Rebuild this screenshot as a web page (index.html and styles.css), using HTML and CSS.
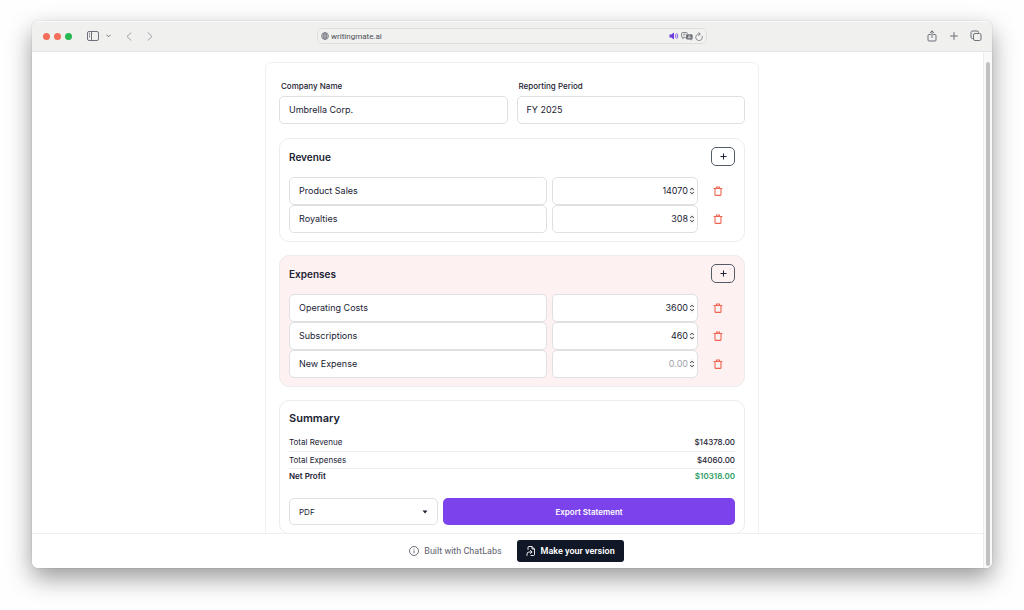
FILE: index.html
```html
<!DOCTYPE html>
<html lang="en">

<head>
    <meta charset="UTF-8">
    <meta name="viewport" content="width=device-width, initial-scale=1.0">
    <title>Income Statement</title>
    <link rel="stylesheet" href="styles.css">
</head>

<body>
    <!-- shared icons -->
    <svg class="sprite" aria-hidden="true">
        <symbol id="trash" viewBox="0 0 10 10">
            <path d="M1 2.500h8M3.500 2.300V1h3v1.300M2 2.700V8.400q0 1 1 1h4q1 0 1-1V2.700" fill="none" stroke="currentColor" stroke-width="1.100" stroke-linecap="round" stroke-linejoin="round" />
        </symbol>
        <symbol id="stepper" viewBox="0 0 6 10">
            <rect x="0.300" y="0.300" width="5.400" height="9.400" rx="2.500" fill="#f3f3f4" />
            <path d="M1.500 3.700L3 2.100L4.500 3.700M1.500 6.300L3 7.900L4.500 6.300" fill="none" stroke="#333" stroke-width="0.900" stroke-linecap="round" stroke-linejoin="round" />
        </symbol>
    </svg>

    <div class="window">
        <header class="toolbar">
            <div class="toolbar-left">
                <div class="lights">
                    <span class="light close"></span>
                    <span class="light minimize"></span>
                    <span class="light zoom"></span>
                </div>
                <div class="sidebar-group">
                    <button class="tool" aria-label="Sidebar">
                        <svg width="12" height="10" viewBox="0 0 12 10" fill="none" stroke="currentColor">
                            <rect x="0.500" y="0.500" width="11" height="9" rx="1.500" />
                            <path d="M4.500 .5v9M2 2.500h1M2 4.200h1M2 5.900h1" />
                        </svg>
                    </button>
                    <button class="tool menu" aria-label="Tab groups">
                        <svg width="5" height="4" viewBox="0 0 5 4" fill="none" stroke="currentColor" stroke-linecap="round">
                            <path d="M.7 1l1.800 1.800L4.300 1" />
                        </svg>
                    </button>
                </div>
                <div class="nav">
                    <button class="tool" aria-label="Back">
                        <svg width="6" height="9" viewBox="0 0 6 9" fill="none" stroke="currentColor" stroke-linecap="round">
                            <path d="M5 .7L1 4.500l4 3.800" />
                        </svg>
                    </button>
                    <button class="tool" aria-label="Forward">
                        <svg width="6" height="9" viewBox="0 0 6 9" fill="none" stroke="currentColor" stroke-linecap="round">
                            <path d="M1 .7l4 3.800l-4 3.800" />
                        </svg>
                    </button>
                </div>
            </div>

            <div class="address">
                <svg width="8" height="8" viewBox="0 0 8 8" fill="none" stroke="currentColor" stroke-width="0.700">
                    <circle cx="4" cy="4" r="3.500" />
                    <ellipse cx="4" cy="4" rx="1.700" ry="3.500" />
                    <path d="M.5 4h7M4 .5v7M1.200 2.200h5.600M1.200 5.800h5.600" />
                </svg>
                <input class="url" type="text" aria-label="Address" value="writingmate.ai">
                <button class="tool sound" aria-label="Mute">
                    <svg width="10" height="8" viewBox="0 0 10 8">
                        <path d="M.5 2.500h1.800L5 .5v7L2.300 5.500H.5z" fill="currentColor" />
                        <path d="M6.500 2.600q1 1.400 0 2.800M7.900 1.400q2 2.600 0 5.200" fill="none" stroke="currentColor" stroke-width="0.800" stroke-linecap="round" />
                    </svg>
                </button>
                <button class="tool" aria-label="Translate">
                    <svg width="12" height="9" viewBox="0 0 12 9">
                        <path d="M4.800 5.500H3L1.800 6.700V5.500Q.5 5.500 .5 4.300V1.700Q.5.500 1.700.5H5.300Q6.500 .5 6.500 1.700" fill="none" stroke="currentColor" stroke-width="0.800" />
                        <path d="M2 4.200q1.600-.7 1.900-2M1.800 2.100h2.900" fill="none" stroke="currentColor" stroke-width="0.600" />
                        <path d="M6.200 2.200h4.200q1.200 0 1.200 1.200v3q0 1.100-1.100 1.100v1.200L9.200 7.500H6.200Q5 7.500 5 6.300V3.400q0-1.200 1.200-1.200z" fill="currentColor" />
                        <path d="M7 6.500l1.300-3L9.600 6.500M7.400 5.500h1.800" fill="none" stroke="#f1f1ef" stroke-width="0.600" />
                    </svg>
                </button>
                <button class="tool" aria-label="Reload">
                    <svg width="8" height="9" viewBox="0 0 8 9" fill="none" stroke="currentColor" stroke-width="0.800" stroke-linecap="round">
                        <path d="M7.200 4.200A3.300 3.300 0 1 1 4 2h1M3.600 .5L5.200 2L3.600 3.500" />
                    </svg>
                </button>
            </div>

            <div class="toolbar-right">
                <button class="tool" aria-label="Share">
                    <svg width="12" height="12" viewBox="0 0 12 12" fill="none" stroke="currentColor" stroke-linecap="round" stroke-linejoin="round">
                        <path d="M4.500 4.500H3q-1 0-1 1V10q0 1 1 1h6q1 0 1-1V5.500q0-1-1-1H7.500M6 7.500V1M4.200 2.600L6 1l1.800 1.600" />
                    </svg>
                </button>
                <button class="tool" aria-label="New tab">
                    <svg width="12" height="12" viewBox="0 0 12 12" fill="none" stroke="currentColor" stroke-linecap="round">
                        <path d="M6 2.500v7M2.500 6h7" />
                    </svg>
                </button>
                <button class="tool" aria-label="Tab overview">
                    <svg width="12" height="12" viewBox="0 0 12 12" fill="none" stroke="currentColor">
                        <rect x="3.500" y="3.500" width="7.500" height="7" rx="1.500" />
                        <path d="M3.500 8.500H2.500q-1.500 0-1.500-1.500V2.500Q1 1 2.500 1H7q1.500 0 1.500 1.500V3.500" />
                    </svg>
                </button>
            </div>
        </header>

        <main class="page">
            <div class="content">
                <form class="statement">
                    <div class="fields">
                        <div class="field">
                            <label for="company">Company Name</label>
                            <input class="input" type="text" id="company" value="Umbrella Corp.">
                        </div>
                        <div class="field">
                            <label for="period">Reporting Period</label>
                            <input class="input" type="text" id="period" value="FY 2025">
                        </div>
                    </div>

                    <section class="panel">
                        <div class="panel-head">
                            <h3>Revenue</h3>
                            <button type="button" class="add" aria-label="Add revenue">
                                <svg width="7" height="7" viewBox="0 0 7 7"><path d="M3.500 .5v6M.5 3.500h6" stroke="currentColor" /></svg>
                            </button>
                        </div>
                        <div class="row">
                            <input class="input" type="text" aria-label="Revenue name" value="Product Sales">
                            <div class="amount">
                                <input type="number" aria-label="Revenue amount" placeholder="0.00" value="14070">
                                <svg width="6" height="10"><use href="#stepper" /></svg>
                            </div>
                            <button type="button" class="remove" aria-label="Remove"><svg width="10" height="10"><use href="#trash" /></svg></button>
                        </div>
                        <div class="row">
                            <input class="input" type="text" aria-label="Revenue name" value="Royalties">
                            <div class="amount">
                                <input type="number" aria-label="Revenue amount" placeholder="0.00" value="308">
                                <svg width="6" height="10"><use href="#stepper" /></svg>
                            </div>
                            <button type="button" class="remove" aria-label="Remove"><svg width="10" height="10"><use href="#trash" /></svg></button>
                        </div>
                    </section>

                    <section class="panel expenses">
                        <div class="panel-head">
                            <h3>Expenses</h3>
                            <button type="button" class="add" aria-label="Add expense">
                                <svg width="7" height="7" viewBox="0 0 7 7"><path d="M3.500 .5v6M.5 3.500h6" stroke="currentColor" /></svg>
                            </button>
                        </div>
                        <div class="row">
                            <input class="input" type="text" aria-label="Expense name" value="Operating Costs">
                            <div class="amount">
                                <input type="number" aria-label="Expense amount" placeholder="0.00" value="3600">
                                <svg width="6" height="10"><use href="#stepper" /></svg>
                            </div>
                            <button type="button" class="remove" aria-label="Remove"><svg width="10" height="10"><use href="#trash" /></svg></button>
                        </div>
                        <div class="row">
                            <input class="input" type="text" aria-label="Expense name" value="Subscriptions">
                            <div class="amount">
                                <input type="number" aria-label="Expense amount" placeholder="0.00" value="460">
                                <svg width="6" height="10"><use href="#stepper" /></svg>
                            </div>
                            <button type="button" class="remove" aria-label="Remove"><svg width="10" height="10"><use href="#trash" /></svg></button>
                        </div>
                        <div class="row">
                            <input class="input" type="text" aria-label="Expense name" value="New Expense">
                            <div class="amount">
                                <input type="number" aria-label="Expense amount" placeholder="0.00">
                                <svg width="6" height="10"><use href="#stepper" /></svg>
                            </div>
                            <button type="button" class="remove" aria-label="Remove"><svg width="10" height="10"><use href="#trash" /></svg></button>
                        </div>
                    </section>

                    <section class="panel">
                        <h2>Summary</h2>
                        <table class="totals">
                            <tr>
                                <th>Total Revenue</th>
                                <td>$14378.00</td>
                            </tr>
                            <tr>
                                <th>Total Expenses</th>
                                <td>$4060.00</td>
                            </tr>
                            <tr class="net">
                                <th>Net Profit</th>
                                <td>$10318.00</td>
                            </tr>
                        </table>
                        <div class="export">
                            <div class="format">
                                <select aria-label="Export format">
                                    <option>PDF</option>
                                </select>
                                <svg width="6" height="4" viewBox="0 0 6 4"><path d="M.5.500h5L3 3.500z" fill="currentColor" /></svg>
                            </div>
                            <button type="button" class="export-btn">Export Statement</button>
                        </div>
                    </section>
                </form>
            </div>

            <footer class="footer">
                <a class="built" href="#">
                    <svg width="10" height="10" viewBox="0 0 10 10" fill="none" stroke="currentColor" stroke-width="0.900">
                        <circle cx="5" cy="5" r="4.500" />
                        <path d="M5 4.500v2.800M5 2.600v1" />
                    </svg>
                    Built with ChatLabs
                </a>
                <button class="remix">
                    <svg width="10" height="10" viewBox="0 0 10 10" fill="none" stroke="currentColor" stroke-width="0.900" stroke-linecap="round" stroke-linejoin="round">
                        <path d="M2 3.500V1.500q0-1 1-1h3L8.500 3v5.500q0 1-1 1H5M6 .7V3h2.300M1 9.500V8q0-2 2-2h2.800M4.400 4.500L6 6L4.400 7.500" />
                    </svg>
                    Make your version
                </button>
            </footer>

            <div class="scrollbar">
                <div class="thumb"></div>
            </div>
        </main>
    </div>
</body>

</html>
```

FILE: styles.css
```css
* {
    margin: 0;
    padding: 0;
    box-sizing: border-box;
}

body {
    height: 100vh;
    padding: 21px 32px 42px;
    background-color: #fefefe;
    color: #1a2233;
    font-family: "Inter", sans-serif;
    font-size: 9px;
}

button,
input,
select {
    font: inherit;
    color: inherit;
    border: none;
    background: none;
    outline: 0;
}

button {
    cursor: pointer;
}

svg {
    display: block;
    flex: none;
}

.sprite {
    position: absolute;
    width: 0;
    height: 0;
}

.window {
    height: 100%;
    display: flex;
    flex-direction: column;
    overflow: hidden;
    background-color: #fff;
    border-radius: 6px;
    box-shadow: 0 0 1px rgba(0, 0, 0, 0.4), 0 10px 24px rgba(0, 0, 0, 0.4);
}

/* browser toolbar */
.toolbar {
    flex: none;
    height: 31px;
    padding: 0 10px 1px;
    display: grid;
    grid-template-columns: 1fr 390px 1fr;
    align-items: center;
    background-color: #f0f0ee;
    border-top: 1px solid #fafafa;
    border-bottom: 1px solid #e4e4e2;
}

.toolbar-left,
.lights,
.sidebar-group,
.nav,
.toolbar-right {
    display: flex;
    align-items: center;
}

.toolbar-left {
    gap: 15px;
}

.lights {
    gap: 4px;
    padding-left: 1px;
}

.light {
    width: 7px;
    height: 7px;
    border-radius: 50%;
    background-color: #f27059;
}

.light.zoom {
    background-color: #27b753;
}

.tool {
    display: flex;
    color: #6d717a;
}

.sidebar-group {
    gap: 3px;
}

.menu {
    padding-left: 3px;
    border-left: 1px solid #e6e6e5;
}

.nav {
    gap: 15px;
}

.nav .tool {
    color: #9c9fa5;
}

.toolbar-right {
    justify-content: flex-end;
    gap: 10px;
}

.address {
    height: 16px;
    padding: 0 3px;
    display: flex;
    align-items: center;
    gap: 2px;
    border: 1px solid #dededd;
    border-radius: 5px;
    background-color: #f1f1ef;
    color: #6d717a;
}

.url {
    flex: 1;
    min-width: 0;
    font-family: "Roboto", sans-serif;
    font-size: 8px;
    color: #4a4e57;
}

.address .sound {
    color: #6b3be0;
}

/* web page */
.page {
    flex: 1;
    min-height: 0;
    position: relative;
    display: flex;
    flex-direction: column;
}

.content {
    flex: 1;
    min-height: 0;
    overflow: hidden;
    padding-top: 10px;
}

.statement {
    width: 100%;
    max-width: 494px;
    margin: 0 auto;
    padding: 17px 13px 13px;
    border: 1px solid #f0f0f1;
    border-radius: 6px;
}

.fields {
    display: grid;
    grid-template-columns: 1fr 1fr;
    gap: 9px;
    margin-bottom: 14px;
}

.field {
    display: flex;
    flex-direction: column;
    gap: 4px;
}

.field label {
    padding-left: 2px;
    font-size: 8px;
    font-weight: 500;
    line-height: 12px;
}

.input,
.amount,
.format {
    width: 100%;
    height: 28px;
    border: 1px solid #dfe0e3;
    border-radius: 5px;
    background-color: #fff;
}

.input {
    padding: 0 9px 1px;
}

.panel {
    padding: 8px 9px;
    margin-bottom: 13px;
    border: 1px solid #ebecee;
    border-radius: 10px;
}

.expenses {
    background-color: #fef1f1;
}

.panel-head {
    display: flex;
    justify-content: space-between;
    align-items: center;
    margin-bottom: 11px;
}

h3 {
    font-size: 10px;
    font-weight: 600;
}

h2 {
    font-size: 11px;
    font-weight: 600;
    line-height: 18px;
    margin-bottom: 7px;
}

.add {
    width: 24px;
    height: 19px;
    display: flex;
    justify-content: center;
    align-items: center;
    border: 1px solid #555c69;
    border-radius: 5px;
}

.row {
    display: grid;
    grid-template-columns: 1fr 146px 32px;
    gap: 5px;
}

.amount,
.format {
    display: flex;
    align-items: center;
    gap: 1px;
    padding-right: 2px;
}

.amount {
    padding-bottom: 1px;
}

.amount input {
    flex: 1;
    min-width: 0;
    text-align: right;
    appearance: textfield;
}

.amount input::-webkit-inner-spin-button {
    display: none;
}

.amount input::placeholder {
    color: #a0a3aa;
}

.remove {
    padding: 0 2px 1px 0;
    display: flex;
    justify-content: center;
    align-items: center;
    color: #ee6350;
}

.totals {
    width: 100%;
    border-collapse: collapse;
    font-size: 8px;
    margin-bottom: 14px;
}

.totals th,
.totals td {
    height: 17px;
    font-weight: 400;
    text-align: left;
    border-bottom: 1px solid #eeeff0;
}

.totals td {
    font-weight: 500;
    text-align: right;
}

.totals .net th,
.totals .net td {
    height: 16px;
    font-weight: 600;
    border-bottom: none;
}

.totals .net td {
    color: #2fa068;
}

.export {
    display: grid;
    grid-template-columns: 149px 1fr;
    gap: 5px;
}

.format {
    height: 27px;
    padding-right: 9px;
    font-size: 8px;
}

.format select {
    flex: 1;
    padding-left: 9px;
    appearance: none;
}

.export-btn {
    border-radius: 5px;
    background-color: #7c42eb;
    color: #fff;
    font-size: 8px;
    font-weight: 600;
}

.footer {
    flex: none;
    height: 35px;
    padding-left: 9px;
    display: flex;
    justify-content: center;
    align-items: center;
    gap: 15px;
    background-color: #fff;
    border-top: 1px solid #eeeeef;
    font-family: "Roboto", sans-serif;
}

.built {
    display: flex;
    align-items: center;
    gap: 5px;
    color: #5c616c;
    text-decoration: none;
}

.remix {
    height: 22px;
    padding: 0 9px;
    display: flex;
    align-items: center;
    gap: 5px;
    border-radius: 3px;
    background-color: #101726;
    color: #fff;
    font-weight: 600;
}

.scrollbar {
    position: absolute;
    top: 0;
    right: 0;
    bottom: 0;
    width: 9px;
    padding: 10px 2px 2px;
    border-left: 1px solid #ececec;
    background-color: #f9f9f9;
}

.thumb {
    height: 100%;
    width: 4px;
    border-radius: 2px;
    background-color: #bfc0c2;
}
```
